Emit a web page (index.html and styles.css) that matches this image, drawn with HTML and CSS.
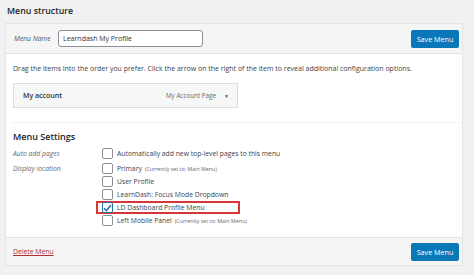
FILE: index.html
```html
<!DOCTYPE html>
<html>
<head>
    <title>Menu structure</title>
    <link rel="stylesheet" href="styles.css">
</head>
<body>
    <h2 class="page-title">Menu structure</h2>

    <div class="menu-panel">
        <div class="panel-header">
            <label class="name-label" for="menuName">Menu Name</label>
            <input class="name-input" id="menuName" type="text" value="Learndash My Profile">
            <button class="button primary">Save Menu</button>
        </div>

        <div class="panel-body">
            <p class="drag-help">Drag the items into the order you prefer. Click the arrow on the right of the item to reveal additional configuration options.</p>

            <div class="menu-item">
                <span class="item-title">My account</span>
                <span class="item-type">My Account Page</span>
                <span class="item-arrow">&#9660;</span>
            </div>

            <div class="menu-settings">
                <h3 class="settings-title">Menu Settings</h3>
                <div class="settings-row">
                    <span class="row-label">Auto add pages</span>
                    <div class="row-options">
                        <label class="option"><span class="checkbox"></span>Automatically add new top-level pages to this menu</label>
                    </div>
                </div>
                <div class="settings-row">
                    <span class="row-label">Display location</span>
                    <div class="row-options">
                        <label class="option"><span class="checkbox"></span>Primary <span class="note">(Currently set to: Main Menu)</span></label>
                        <label class="option"><span class="checkbox"></span>User Profile</label>
                        <label class="option"><span class="checkbox"></span>LearnDash: Focus Mode Dropdown</label>
                        <label class="option highlighted"><span class="checkbox checked"><svg width="9" height="8" viewBox="0 0 9 8"><path d="M1 4.2 L3.4 6.6 L8 1.2" fill="none" stroke="#2271b1" stroke-width="1.6"/></svg></span>LD Dashboard Profile Menu</label>
                        <label class="option"><span class="checkbox"></span>Left Mobile Panel <span class="note">(Currently set to: Main Menu)</span></label>
                    </div>
                </div>
            </div>
        </div>

        <div class="panel-footer">
            <a class="delete-link" href="#">Delete Menu</a>
            <button class="button primary">Save Menu</button>
        </div>
    </div>
</body>
</html>
```

FILE: styles.css
```css
:root {
    --wp-blue: #0a78b8;
    --text-color: #2c3338;
    --muted: #646970;
    --border: #dcdcde;
    --panel-grey: #f5f5f5;
}

body {
    margin: 0;
    padding: 0 11px 0 5px;
    background: #f1f1f1;
    color: var(--text-color);
    font-family: "Open Sans", "Noto Sans", sans-serif;
    font-size: 7px;
}

.page-title {
    margin: 0;
    padding: 5px 0 0 2px;
    height: 18px;
    font-size: 8.8px;
    font-weight: 600;
    color: #1d2327;
}

.menu-panel {
    background: #fff;
    border: 1px solid #e2e4e7;
    box-shadow: 0 1px 1px rgba(0, 0, 0, 0.04);
}

.panel-header {
    display: flex;
    align-items: center;
    height: 29px;
    padding: 0 3px 0 8px;
    background: var(--panel-grey);
    border-bottom: 1px solid #e2e4e7;
}

.name-label {
    font-style: italic;
    font-size: 6.8px;
    color: #50575e;
    width: 44px;
}

.name-input {
    width: 145px;
    height: 17px;
    box-sizing: border-box;
    border: 1px solid #8c8f94;
    border-radius: 3px;
    padding: 0 4px;
    font-family: inherit;
    font-size: 7px;
    color: var(--text-color);
    background: #fff;
}

.button {
    margin-left: auto;
    width: 48px;
    height: 18px;
    padding: 0;
    border: none;
    border-radius: 2px;
    font-family: inherit;
    font-size: 7.2px;
    cursor: pointer;
}

.button.primary {
    background: var(--wp-blue);
    color: #fff;
}

.panel-body {
    padding: 0 3px 0 7px;
}

.drag-help {
    margin: 0;
    padding: 8px 0 0;
    height: 21px;
    line-height: 14px;
    color: #3c434a;
}

.menu-item {
    display: flex;
    align-items: center;
    width: 206px;
    height: 23px;
    padding: 0 8px 0 9px;
    background: #f6f7f7;
    border: 1px solid var(--border);
}

.item-title {
    font-weight: 600;
    font-size: 7px;
}

.item-type {
    margin-left: auto;
    font-size: 6.3px;
    color: var(--muted);
}

.item-arrow {
    margin-left: 8px;
    font-size: 5px;
    color: #50575e;
}

.menu-settings {
    margin-top: 14px;
    border-top: 1px solid #f0f0f1;
    padding: 6px 0 10px;
}

.settings-title {
    margin: 0 0 2px;
    font-size: 9px;
    font-weight: 600;
    color: #1d2327;
    line-height: 16px;
}

.settings-row {
    display: flex;
    margin-top: 2px;
}

.row-label {
    width: 89px;
    flex-shrink: 0;
    font-style: italic;
    font-size: 6.8px;
    color: #646970;
    line-height: 13px;
}

.row-options {
    display: flex;
    flex-direction: column;
}

.option {
    display: flex;
    align-items: center;
    height: 13px;
    white-space: nowrap;
    font-size: 6.8px;
    color: #3c434a;
}

.note {
    margin-left: 3px;
    font-size: 5.3px;
    color: var(--muted);
}

.checkbox {
    display: inline-flex;
    align-items: center;
    justify-content: center;
    width: 9px;
    height: 9px;
    margin-right: 4px;
    border: 1px solid #8c8f94;
    border-radius: 2px;
    background: #fff;
}

.checkbox.checked {
    border-color: #2271b1;
}

.highlighted {
    margin-left: -6px;
    padding-left: 4px;
    width: 136px;
    border: 2px solid #d63638;
    height: 9px;
}

.panel-footer {
    display: flex;
    align-items: center;
    height: 27px;
    padding: 0 3px 0 7px;
    background: var(--panel-grey);
    border-top: 1px solid #e2e4e7;
}

.delete-link {
    color: #b32d2e;
    font-size: 6.8px;
}
```
